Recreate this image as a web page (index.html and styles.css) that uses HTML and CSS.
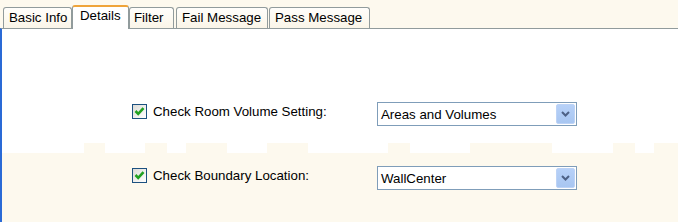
FILE: index.html
```html
<!DOCTYPE html>
<html lang="en">
<head>
    <meta charset="UTF-8">
    <title>Details</title>
    <link rel="stylesheet" href="styles.css">
</head>
<body>
    <div class="window">
        <div class="tabs">
            <div class="tab tab-basic">Basic Info</div>
            <div class="tab tab-details active">Details</div>
            <div class="tab tab-filter">Filter</div>
            <div class="tab tab-fail">Fail Message</div>
            <div class="tab tab-pass">Pass Message</div>
        </div>
        <div class="panel">
            <div class="upper">
                <div class="row">
                    <label class="check">
                        <span class="box">
                            <svg width="11" height="11" viewBox="0 0 11 11"><path d="M1.5 5 L4.2 7.8 L9.5 2.2" fill="none" stroke="#21a121" stroke-width="2.6"/></svg>
                        </span>
                        Check Room Volume Setting:
                    </label>
                    <div class="combo">
                        <span class="combo-text">Areas and Volumes</span>
                        <span class="combo-btn">
                            <svg width="9" height="6" viewBox="0 0 9 6"><path d="M1 1 L4.5 4.5 L8 1" fill="none" stroke="#4d6185" stroke-width="2"/></svg>
                        </span>
                    </div>
                </div>
            </div>
            <div class="seam">
                <span></span><span class="bump"></span>
                <span></span><span class="bump"></span>
                <span></span><span class="bump"></span>
                <span></span><span class="bump"></span>
                <span></span><span class="bump"></span>
                <span></span><span class="bump"></span>
                <span></span><span class="bump"></span>
                <span></span><span class="bump"></span>
                <span class="bump"></span>
            </div>
            <div class="lower">
                <div class="row">
                    <label class="check">
                        <span class="box">
                            <svg width="11" height="11" viewBox="0 0 11 11"><path d="M1.5 5 L4.2 7.8 L9.5 2.2" fill="none" stroke="#21a121" stroke-width="2.6"/></svg>
                        </span>
                        Check Boundary Location:
                    </label>
                    <div class="combo">
                        <span class="combo-text">WallCenter</span>
                        <span class="combo-btn">
                            <svg width="9" height="6" viewBox="0 0 9 6"><path d="M1 1 L4.5 4.5 L8 1" fill="none" stroke="#4d6185" stroke-width="2"/></svg>
                        </span>
                    </div>
                </div>
            </div>
        </div>
    </div>
</body>
</html>
```

FILE: styles.css
```css
body {
    margin: 0;
    background-color: #fdf9ee;
    font-family: "Liberation Sans", Arial, sans-serif;
    font-size: 13.3px;
    color: #000;
}
.window {
    width: 678px;
    height: 222px;
    display: flex;
    flex-direction: column;
    overflow: hidden;
}
.tabs {
    height: 28px;
    box-sizing: border-box;
    display: flex;
    align-items: flex-end;
    padding-left: 3px;
}
.tab {
    height: 21px;
    box-sizing: border-box;
    border: 1px solid #919b9c;
    border-bottom: none;
    border-radius: 3px 3px 0 0;
    background: linear-gradient(#fffefb, #faf5e8);
    line-height: 20px;
    padding-left: 5px;
    white-space: nowrap;
}
.tab-basic { width: 69px; }
.tab-details { width: 57px; }
.tab-filter { width: 45px; padding-left: 4px; }
.tab-fail { width: 92px; margin-left: 2px; }
.tab-pass { width: 101px; margin-left: 1px; }
.tab.active {
    height: 24px;
    margin-bottom: -1px;
    position: relative;
    z-index: 1;
    background: #fff;
    border-top: 2px solid #efa43a;
    line-height: 18px;
    padding-left: 7px;
}
.panel {
    flex: 1;
    display: flex;
    flex-direction: column;
    border-left: 2px solid #2a6ad6;
    border-top: 1px solid #919b9c;
    background: #fff;
}
.upper {
    height: 114px;
    box-sizing: border-box;
    padding-top: 73px;
}
.seam {
    height: 10px;
    display: grid;
    grid-template-columns: 82px 21px 40px 22px 19px 41px 40px 41px 80px 22px 60px 82px 61px 22px 19px 21px 1fr;
}
.seam .bump {
    background: #fdf9ee;
}
.lower {
    flex: 1;
    background: #fdf9ee;
    padding-top: 13px;
}
.row {
    display: flex;
    align-items: flex-start;
    padding-left: 130px;
}
.check {
    width: 245px;
    display: flex;
    align-items: center;
    margin-top: 2px;
    line-height: 15px;
    white-space: nowrap;
}
.box {
    width: 15px;
    height: 15px;
    box-sizing: border-box;
    border: 1px solid #1c5180;
    background: linear-gradient(135deg, #dcdcd7, #fff);
    display: flex;
    align-items: center;
    justify-content: center;
    margin-right: 6px;
}
.combo {
    width: 200px;
    height: 24px;
    box-sizing: border-box;
    border: 1px solid #7f9db9;
    background: #fff;
    display: flex;
    align-items: center;
    padding: 1px 1px 1px 3px;
}
.combo-text {
    flex: 1;
    white-space: nowrap;
}
.combo-btn {
    width: 19px;
    height: 20px;
    box-sizing: border-box;
    border: 1px solid #bdd3f6;
    border-radius: 2px;
    background: linear-gradient(#b7d1f8, #a8c6f1);
    display: flex;
    align-items: center;
    justify-content: center;
}
```
